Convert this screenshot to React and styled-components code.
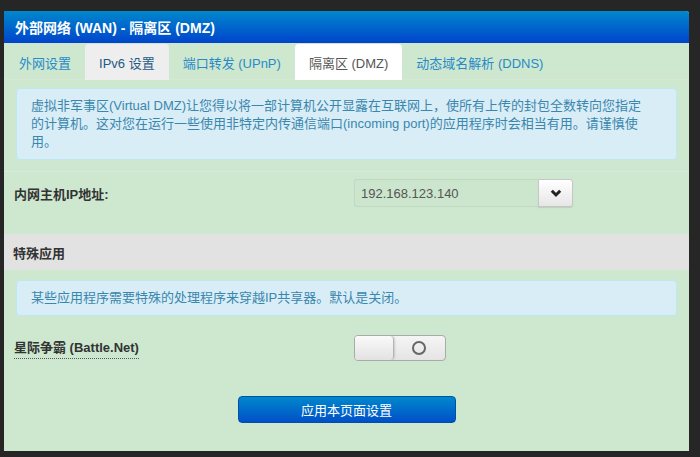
import React from "react";
import styled, { createGlobalStyle } from "styled-components";

const Global = createGlobalStyle`
  html, body { margin: 0; padding: 0; background: #262626; }
  body { font-family: "Liberation Sans", Arial, "Noto Sans CJK SC", sans-serif; font-size: 13px; color: #333; }
  * { box-sizing: border-box; }
`;

const Page = styled.div`
  padding: 11px 11px 6px 4px;
  height: 457px;
`;

const Panel = styled.div`
  width: 685px;
  height: 440px;
  background: #cde8cf;
  border-radius: 0 3px 0 0;
  display: flex;
  flex-direction: column;
`;

const Header = styled.div`
  height: 32px;
  display: flex;
  align-items: center;
  padding-left: 11px;
  background: linear-gradient(to bottom, #0088cc, #0044cc);
  color: #fff;
  font-weight: bold;
  font-size: 14px;
  border-radius: 0 3px 0 0;
`;

const Tabs = styled.div`
  display: flex;
  height: 37px;
  padding: 1px 0 0 1px;
  border-bottom: 1px solid #d8e6d8;
`;

const Tab = styled.div`
  height: 36px;
  padding: 0 14px;
  display: flex;
  align-items: center;
  border-radius: 4px 4px 0 0;
  color: ${(p) => (p.$active ? "#555" : p.$hover ? "#1f5a85" : "#2a8ac9")};
  background: ${(p) => (p.$active ? "#fff" : p.$hover ? "#eeeeee" : "transparent")};
  font-size: 13px;
`;

const Info = styled.div`
  margin: ${(p) => p.$m || "8px 12px 0"};
  padding: 8px 14px 8px 14px;
  background: #d9edf7;
  border: 1px solid #bce8f1;
  border-radius: 4px;
  color: #3a87ad;
  line-height: 18px;
  font-size: 13px;
  white-space: nowrap;
`;

const Row = styled.div`
  display: flex;
  align-items: ${(p) => (p.$pt ? "flex-start" : "center")};
  height: ${(p) => p.$h}px;
  padding-top: ${(p) => p.$pt || 0}px;
  border-top: ${(p) => (p.$line ? "1px solid #dfe8df" : "none")};
  margin-top: ${(p) => p.$mt || 0}px;
`;

const Label = styled.div`
  width: 350px;
  min-height: 28px;
  padding-left: 10px;
  display: flex;
  align-items: center;
  font-weight: bold;
  color: #333;
`;

const Dotted = styled.span`
  border-bottom: 1px dotted #555;
  padding-bottom: 2px;
`;

const InputGroup = styled.div`
  display: flex;
  height: 28px;
`;

const Input = styled.div`
  width: 184px;
  height: 28px;
  border: 1px solid #c2d8c3;
  border-right: none;
  border-radius: 3px 0 0 3px;
  background: #cbe6cd;
  color: #555;
  display: flex;
  align-items: center;
  padding-left: 6px;
  font-size: 13px;
`;

const AddonBtn = styled.div`
  width: 35px;
  height: 28px;
  border: 1px solid #c6c6c6;
  border-radius: 0 3px 3px 0;
  background: linear-gradient(to bottom, #ffffff, #e6e6e6);
  display: flex;
  align-items: center;
  justify-content: center;
  box-shadow: 0 1px 1px rgba(0,0,0,0.1);
`;

const Section = styled.div`
  margin-top: ${(p) => p.$mt || 0}px;
  height: 36px;
  background: #e2e2e2;
  display: flex;
  align-items: center;
  padding-left: 9px;
  font-weight: bold;
  color: #333;
`;

const Switch = styled.div`
  width: 92px;
  height: 26px;
  border: 1px solid #aaa;
  border-radius: 4px;
  display: flex;
  overflow: hidden;
  background: linear-gradient(to bottom, #f5f5f5, #e4e4e4);
`;

const Knob = styled.div`
  width: 39px;
  height: 100%;
  background: linear-gradient(to bottom, #fafafa, #e2e2e2);
  border-right: 1px solid #b5b5b5;
  border-radius: 0 4px 4px 0;
  box-shadow: 1px 0 2px rgba(0,0,0,0.15);
`;

const Off = styled.div`
  flex: 1;
  display: flex;
  align-items: center;
  justify-content: center;
  padding-right: 2px;
`;

const Circle = styled.div`
  width: 14px;
  height: 14px;
  border: 2px solid #666;
  border-radius: 50%;
`;

const Footer = styled.div`
  display: flex;
  justify-content: center;
  margin-top: ${(p) => p.$mt}px;
`;

const Button = styled.div`
  width: 218px;
  height: 27px;
  border-radius: 4px;
  background: linear-gradient(to bottom, #0088cc, #0050c8);
  border: 1px solid #0050a8;
  color: #fff;
  display: flex;
  align-items: center;
  justify-content: center;
  font-size: 13px;
`;

const Chevron = () => (
  <svg width="12" height="10" viewBox="0 0 12 10">
    <path d="M1.8 2.8 L6 7 L10.2 2.8" fill="none" stroke="#222" strokeWidth="3" />
  </svg>
);

export default function App() {
  return (
    <>
      <Global />
      <Page>
        <Panel>
          <Header>外部网络 (WAN) - 隔离区 (DMZ)</Header>
          <Tabs>
            <Tab>外网设置</Tab>
            <Tab $hover>IPv6 设置</Tab>
            <Tab>端口转发 (UPnP)</Tab>
            <Tab $active>隔离区 (DMZ)</Tab>
            <Tab>动态域名解析 (DDNS)</Tab>
          </Tabs>
          <Info>
            虚拟非军事区(Virtual DMZ)让您得以将一部计算机公开显露在互联网上，使所有上传的封包全数转向您指定
            <br />
            的计算机。这对您在运行一些使用非特定内传通信端口(incoming port)的应用程序时会相当有用。请谨慎使
            <br />
            用。
          </Info>
          <Row $h={63} $pt={7} $line $mt={11}>
            <Label>内网主机IP地址:</Label>
            <InputGroup>
              <Input>192.168.123.140</Input>
              <AddonBtn>
                <Chevron />
              </AddonBtn>
            </InputGroup>
          </Row>
          <Section>特殊应用</Section>
          <Info $m="10px 12px 0">某些应用程序需要特殊的处理程序来穿越IP共享器。默认是关闭。</Info>
          <Row $h={64}>
            <Label>
              <Dotted>星际争霸 (Battle.Net)</Dotted>
            </Label>
            <Switch>
              <Knob />
              <Off>
                <Circle />
              </Off>
            </Switch>
          </Row>
          <Footer $mt={16}>
            <Button>应用本页面设置</Button>
          </Footer>
        </Panel>
      </Page>
    </>
  );
}
